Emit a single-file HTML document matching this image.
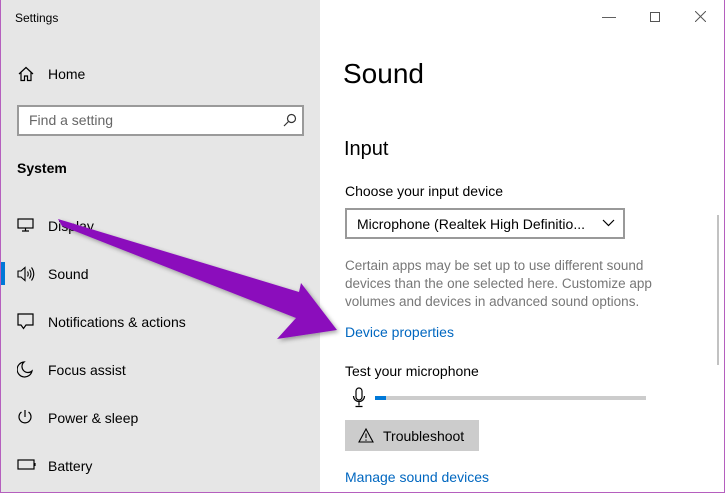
<!DOCTYPE html>
<html><head><style>
*{margin:0;padding:0;box-sizing:border-box}
body{width:725px;height:493px;overflow:hidden;font-family:"Liberation Sans",sans-serif;background:#fff;position:relative}
.win{position:absolute;left:0;top:0;width:725px;height:493px;border:1px solid #b55fbe;border-top:none}
.side{position:absolute;left:1px;top:0;width:319px;height:492px;background:#e6e6e6}
.t{position:absolute;font-size:14px;color:#000;white-space:nowrap}
.ic{position:absolute}
.blue{color:#0067c0}
</style></head><body>
<div class="win"></div>
<div class="side"></div>
<div class="t" style="left:15px;top:11px;font-size:12px">Settings</div>
<svg class="ic" style="left:18px;top:66px" width="16" height="16" viewBox="0 0 16 16" fill="none" stroke="#000" stroke-width="1.2"><path d="M1 8L8 1.5 15 8M3 6.5V14.5H6.5V10h3v4.5H13V6.5"/></svg>
<div class="t" style="left:48px;top:66px">Home</div>
<div style="position:absolute;left:17px;top:105px;width:287px;height:31px;border:2px solid #9a9a9a;background:#fff"></div>
<div class="t" style="left:29px;top:112px;color:#666">Find a setting</div>
<svg class="ic" style="left:283px;top:113px" width="14" height="14" viewBox="0 0 14 14" fill="none" stroke="#333" stroke-width="1.2"><circle cx="8.5" cy="5.5" r="4"/><path d="M5.5 8.5L1 13"/></svg>
<div class="t" style="left:17px;top:160px;font-weight:bold">System</div>
<svg class="ic" style="left:17px;top:218px" width="18" height="14" viewBox="0 0 18 14" fill="none" stroke="#000" stroke-width="1.2"><rect x="1" y="1" width="15" height="9"/><path d="M8.5 10v3M5 13h7"/></svg>
<div class="t" style="left:48px;top:218px">Display</div>
<div style="position:absolute;left:1px;top:262px;width:4px;height:23px;background:#0078d7"></div>
<svg class="ic" style="left:17px;top:266px" width="18" height="16" viewBox="0 0 18 16" fill="none" stroke="#000" stroke-width="1.1"><path d="M1 5h3l4-3.5v13L4 11H1z M10.5 5.5q1.5 2.5 0 5M12.5 3.5q3 4.5 0 9M14.5 1.5q4.5 6.5 0 13"/></svg>
<div class="t" style="left:48px;top:266px">Sound</div>
<svg class="ic" style="left:17px;top:313px" width="18" height="17" viewBox="0 0 18 17" fill="none" stroke="#000" stroke-width="1.2"><path d="M1 1h15v11H9l-2.5 3.5L4 12H1z"/></svg>
<div class="t" style="left:48px;top:314px">Notifications &amp; actions</div>
<svg class="ic" style="left:17px;top:361px" width="16" height="17" viewBox="0 0 16 17" fill="none" stroke="#000" stroke-width="1.2"><path d="M7 1a7.5 7.5 0 1 0 8 9A6 6 0 0 1 7 1z"/></svg>
<div class="t" style="left:48px;top:362px">Focus assist</div>
<svg class="ic" style="left:17px;top:409px" width="16" height="16" viewBox="0 0 16 16" fill="none" stroke="#000" stroke-width="1.2"><path d="M8 1v7M4.5 3a6 6 0 1 0 7 0"/></svg>
<div class="t" style="left:48px;top:410px">Power &amp; sleep</div>
<svg class="ic" style="left:17px;top:459px" width="20" height="11" viewBox="0 0 20 11" fill="none" stroke="#000" stroke-width="1.2"><rect x="1" y="1" width="16" height="9"/><path d="M18 4v3"/></svg>
<div class="t" style="left:48px;top:458px">Battery</div>

<div class="t" style="left:602px;top:8px;color:#555">&#8212;</div>
<div style="position:absolute;left:650px;top:12px;width:10px;height:10px;border:1px solid #555"></div>
<svg class="ic" style="left:695px;top:11px" width="11" height="11"><path d="M0 0L11 11M11 0L0 11" stroke="#555"/></svg>

<div class="t" style="left:343px;top:58px;font-size:28px">Sound</div>
<div class="t" style="left:344px;top:138px;font-size:20px">Input</div>
<div class="t" style="left:345px;top:183px">Choose your input device</div>
<div style="position:absolute;left:345px;top:208px;width:280px;height:31px;border:2px solid #999"></div>
<div class="t" style="left:357px;top:216px">Microphone (Realtek High Definitio...</div>
<svg class="ic" style="left:602px;top:219px" width="13" height="8"><path d="M1 1l5.5 5.5L12 1" stroke="#000" fill="none" stroke-width="1.2"/></svg>
<div class="t" style="left:345px;top:257px;color:#777;line-height:18px;font-size:13.5px;white-space:normal;width:320px">Certain apps may be set up to use different sound devices than the one selected here. Customize app volumes and devices in advanced sound options.</div>
<div class="t blue" style="left:345px;top:324px">Device properties</div>
<div class="t" style="left:345px;top:363px">Test your microphone</div>
<svg class="ic" style="left:352px;top:387px" width="14" height="22" viewBox="0 0 14 22" fill="none" stroke="#000" stroke-width="1.2"><rect x="4" y="1" width="6" height="12" rx="3"/><path d="M1.5 9a5.5 5.5 0 0 0 11 0M7 14.5v4M3.5 19.5h7"/></svg>
<div style="position:absolute;left:375px;top:396px;width:271px;height:4px;background:#ccc"></div>
<div style="position:absolute;left:375px;top:396px;width:11px;height:4px;background:#0078d7"></div>
<div style="position:absolute;left:345px;top:420px;width:134px;height:31px;background:#ccc"></div>
<svg class="ic" style="left:358px;top:428px" width="16" height="15"><path d="M8 1L1 14h14z M8 5.5v4.5M8 11.5v1.2" stroke="#000" fill="none" stroke-width="1.1"/></svg>
<div class="t" style="left:383px;top:428px">Troubleshoot</div>
<div class="t blue" style="left:345px;top:469px">Manage sound devices</div>
<div style="position:absolute;left:717px;top:215px;width:2px;height:150px;background:#c2c2c2"></div>

<svg class="ic" style="left:0;top:0" width="725" height="493"><defs><filter id="s"><feDropShadow dx="2" dy="2" stdDeviation="2" flood-opacity=".35"/></filter></defs>
<path filter="url(#s)" fill="#8b10bc" d="M58 219L299 292L301 283L337 330L277 339L296 318L62 226Z"/></svg>
</body></html>
